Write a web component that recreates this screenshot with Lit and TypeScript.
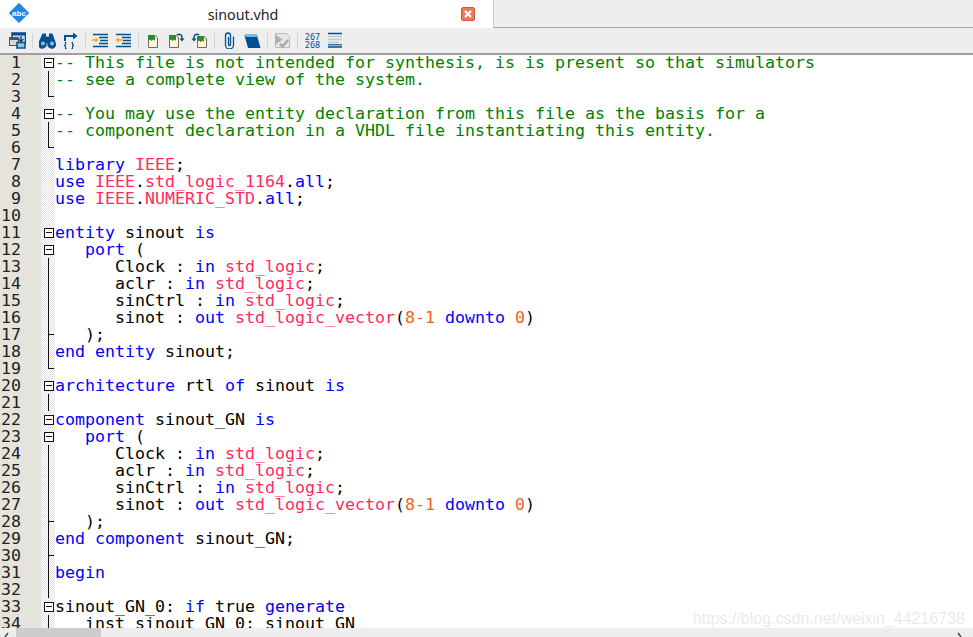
import { html, css, svg, LitElement } from "lit";
import { customElement } from "lit/decorators.js";

type Fold = "" | "box" | "line" | "end" | "tee";
// [class, text]: c comment, k keyword, t library/type, n number
type Token = [string, string];

const STD: Token[] = [["t", "std_logic"], ["", ";"]];

const port = (): [Fold, Token[]][] => [
  ["box", [["", "   "], ["k", "port"], ["", " ("]]],
  ["line", [["", "      Clock : "], ["k", "in"], ["", " "], ...STD]],
  ["line", [["", "      aclr : "], ["k", "in"], ["", " "], ...STD]],
  ["line", [["", "      sinCtrl : "], ["k", "in"], ["", " "], ...STD]],
  [
    "line",
    [
      ["", "      sinot : "],
      ["k", "out"],
      ["", " "],
      ["t", "std_logic_vector"],
      ["", "("],
      ["n", "8-1"],
      ["", " "],
      ["k", "downto"],
      ["", " "],
      ["n", "0"],
      ["", ")"],
    ],
  ],
  ["tee", [["", "   );"]]],
];

const LINES: [Fold, Token[]][] = [
  ["box", [["c", "-- This file is not intended for synthesis, is is present so that simulators"]]],
  ["line", [["c", "-- see a complete view of the system."]]],
  ["end", []],
  ["box", [["c", "-- You may use the entity declaration from this file as the basis for a"]]],
  ["line", [["c", "-- component declaration in a VHDL file instantiating this entity."]]],
  ["end", []],
  ["", [["k", "library"], ["", " "], ["t", "IEEE"], ["", ";"]]],
  ["", [["k", "use"], ["", " "], ["t", "IEEE"], ["", "."], ["t", "std_logic_1164"], ["", "."], ["k", "all"], ["", ";"]]],
  ["", [["k", "use"], ["", " "], ["t", "IEEE"], ["", "."], ["t", "NUMERIC_STD"], ["", "."], ["k", "all"], ["", ";"]]],
  ["", []],
  ["box", [["k", "entity"], ["", " sinout "], ["k", "is"]]],
  ...port(),
  ["line", [["k", "end"], ["", " "], ["k", "entity"], ["", " sinout;"]]],
  ["end", []],
  ["box", [["k", "architecture"], ["", " rtl "], ["k", "of"], ["", " sinout "], ["k", "is"]]],
  ["line", []],
  ["box", [["k", "component"], ["", " sinout_GN "], ["k", "is"]]],
  ...port(),
  ["line", [["k", "end"], ["", " "], ["k", "component"], ["", " sinout_GN;"]]],
  ["tee", []],
  ["line", [["k", "begin"]]],
  ["line", []],
  ["box", [["", "sinout_GN_0: "], ["k", "if"], ["", " true "], ["k", "generate"]]],
  ["line", [["", "   inst sinout_GN_0: sinout_GN"]]],
];

const BLUE = "#00508f";

const ICONS = {
  window: svg`<rect x="3" y="1" width="13.500" height="11" fill="#cfe0ee" stroke="${BLUE}" stroke-width="1.500"/><rect x="3" y="1" width="13.500" height="2.500" fill="${BLUE}"/><rect x="0.500" y="5.500" width="9" height="8" fill="#d8d8d8" stroke="#555"/><rect x="0.500" y="5.500" width="9" height="2.500" fill="#555"/><rect x="8" y="10.500" width="8" height="5.500" fill="#9cc3e0" stroke="${BLUE}" stroke-width="1.500"/><path d="M12 4v5M9.500 7l2.500 2.500L14.500 7" fill="none" stroke="${BLUE}" stroke-width="1.500"/>`,
  binoculars: svg`<path d="M3.500 1.500h3.500v3h3V1.500h3.500l3.500 10a4.400 4.400 0 1 1-8.500-.5H7.500a4.400 4.400 0 1 1-8.500.5z" fill="${BLUE}"/><circle cx="4" cy="11.500" r="2" fill="#8fbcdc"/><circle cx="13" cy="11.500" r="2" fill="#8fbcdc"/>`,
  braces: svg`<path d="M3 9V4h9" fill="none" stroke="${BLUE}" stroke-width="2"/><path d="M11 0.500L15.500 4 11 7.500z" fill="${BLUE}"/><path d="M4.500 10.500H3.500V12.500L2.500 13.500l1 1v2h1M9.500 10.500h1v2l1 1-1 1v2h-1" fill="none" stroke="${BLUE}" stroke-width="1.100"/>`,
  indent: svg`<path d="M1 2.500h15M7 5.500h9M8 8.500h8M7 11.500h9M1 14.500h15" stroke="${BLUE}" stroke-width="1.500"/><path d="M0 8h4" stroke="#f5a623" stroke-width="1.500"/><path d="M3.500 5.500l3 2.500-3 2.500z" fill="#f5a623"/>`,
  outdent: svg`<path d="M1 2.500h15M7 5.500h9M8 8.500h8M7 11.500h9M1 14.500h15" stroke="${BLUE}" stroke-width="1.500"/><path d="M3 8h4.500" stroke="#f5a623" stroke-width="1.500"/><path d="M4 5.500L0.500 8 4 10.500z" fill="#f5a623"/>`,
  doc: svg`<path d="M3.500 3.500h7l2 2.500v9.500h-9z" fill="#fff6dc" stroke="#7a6a55"/><path d="M3 3h7v6L8.500 7.500 6.500 9 5 7.500 3 9z" fill="#2f8a2f"/>`,
  docNext: svg`<path d="M1.500 3.500h7l2 2.500v9.500h-9z" fill="#fff6dc" stroke="#7a6a55"/><path d="M1 3h7v6L6.500 7.500 4.500 9 3 7.500 1 9z" fill="#2f8a2f"/><path d="M9 3a3 3 0 0 1 5 2v2" fill="none" stroke="${BLUE}" stroke-width="1.500"/><path d="M11.500 6.500h5l-2.500 3z" fill="${BLUE}"/>`,
  docPrev: svg`<path d="M6.500 4.500h7l2 2.500v8.500h-9z" fill="#fff6dc" stroke="#7a6a55"/><path d="M6 4h7v6l-1.500-1.500L9.500 10 8 8.500 6 10z" fill="#2f8a2f"/><path d="M8 3a3 3 0 0 0-5 2v2" fill="none" stroke="${BLUE}" stroke-width="1.500"/><path d="M0.500 6.500h5l-2.500 3z" fill="${BLUE}"/>`,
  clip: svg`<path d="M12.500 4.500v8.500a4 4 0 0 1-8 0V3.500a2.500 2.500 0 0 1 5 0v9a1 1 0 0 1-2 0V5" fill="none" stroke="${BLUE}" stroke-width="1.300"/>`,
  scroll: svg`<path d="M0.500 3.500h12.500l3.500 12.500H4z" fill="${BLUE}"/><path d="M1 2h12l1 3H2z" fill="#6cc0ee"/>`,
  note: svg`<path d="M1.500 1.500h11l3 3v11h-14z" fill="#e6e6e6" stroke="#bbb"/><path d="M1 2l7.500 5.500L1 13z" fill="#b0b0b0"/><path d="M6 12l2.500 2.500L14 8" fill="none" stroke="#a8a8a8" stroke-width="2.500"/>`,
  wrap: svg`<path d="M1 1.500h14M1 15h14" stroke="${BLUE}" stroke-width="1.500"/><path d="M1 4.500h14M1 7.500h14" stroke="#c8c8c8" stroke-width="1.500"/><path d="M1 10.500h11" stroke="#c8c8c8" stroke-width="1.500"/><path d="M1 12.800h14" stroke="${BLUE}" stroke-width="1.200"/>`,
};

const TOOLBAR: (keyof typeof ICONS | "sep" | "nums")[] = [
  "window", "sep",
  "binoculars", "braces", "sep",
  "indent", "outdent", "sep",
  "doc", "docNext", "docPrev", "sep",
  "clip", "scroll", "sep",
  "note", "sep",
  "nums", "wrap",
];

@customElement("app-root")
export class AppRoot extends LitElement {
  static styles = css`
    :host {
      display: flex;
      flex-direction: column;
      position: relative;
      width: 973px;
      height: 637px;
      overflow: hidden;
      background: #fff;
      font-family: "Noto Sans", sans-serif;
    }

    .tabbar {
      flex: none;
      display: flex;
      height: 28px;
      background: #fff;
    }

    .logo {
      flex: none;
      width: 20px;
      height: 20px;
      margin: 3px 0 0 9px;
    }

    .tab {
      flex: none;
      display: flex;
      align-items: center;
      width: 464px;
      height: 28px;
    }

    .tab-name {
      width: 428px;
      text-align: center;
      font-size: 14.3px;
      color: #222;
    }

    .tab-close {
      flex: none;
      box-sizing: border-box;
      display: flex;
      align-items: center;
      justify-content: center;
      width: 14px;
      height: 14px;
      margin-left: 4px;
      background: #e8795c;
      border: 1px solid #d4553f;
      border-radius: 2px;
    }

    .tab-rest {
      flex: 1;
      background: #eeeeee;
      border-left: 1px solid #d0d0d0;
      border-bottom: 1px solid #a6a6a6;
    }

    .toolbar {
      flex: none;
      position: relative;
      z-index: 1;
      box-sizing: border-box;
      display: flex;
      align-items: center;
      height: 27px;
      padding-left: 6px;
      background: #eeeeee;
      border-bottom: 2px solid #a0a0a0;
    }

    .tool {
      flex: none;
      display: flex;
      align-items: center;
      justify-content: center;
      width: 23px;
      height: 24px;
    }

    .tool svg {
      width: 17px;
      height: 17px;
    }

    .sep {
      flex: none;
      width: 1px;
      height: 16px;
      margin: 0 3px;
      background: #d2d2d2;
    }

    .nums {
      font-family: "DejaVu Sans Mono", monospace;
      font-size: 8.5px;
      line-height: 8px;
      color: #00508f;
    }

    .editor {
      flex: 1;
      min-height: 0;
      margin-top: -1px;
      overflow: hidden;
    }

    .row {
      display: flex;
      height: 17px;
    }

    .num {
      flex: none;
      box-sizing: border-box;
      width: 41px;
      padding-right: 20px;
      text-align: right;
      background: #e4e4dc;
      color: #222;
      font-family: "DejaVu Sans Mono", monospace;
      font-size: 16.6px;
      line-height: 17px;
    }

    .fold {
      flex: none;
      position: relative;
      width: 14px;
      background-color: #fff;
      background-image: conic-gradient(#e2e2e2 25%, #fff 0 50%, #e2e2e2 0 75%, #fff 0);
      background-size: 2px 2px;
    }

    .box {
      position: absolute;
      left: 3px;
      top: 4px;
      box-sizing: border-box;
      width: 10px;
      height: 10px;
      background: #fff;
      border: 1px solid #111;
    }

    .box::after {
      content: "";
      position: absolute;
      left: 1px;
      top: 3px;
      width: 6px;
      height: 1px;
      background: #111;
    }

    .line::after,
    .end::after,
    .tee::after {
      content: "";
      position: absolute;
      left: 7px;
      top: 0;
      width: 1px;
      height: 17px;
      background: #111;
    }

    .end::after {
      height: 9px;
    }

    .end::before,
    .tee::before {
      content: "";
      position: absolute;
      left: 7px;
      top: 8px;
      width: 6px;
      height: 1px;
      background: #111;
    }

    .code {
      flex: 1;
      margin: 0;
      font-family: "DejaVu Sans Mono", monospace;
      font-size: 16.62px;
      line-height: 17px;
      white-space: pre;
      color: #000;
    }

    .c { color: #008000; }
    .k { color: #0000ff; }
    .t { color: #ff2a5e; }
    .n { color: #f5601e; }

    .scrollbar {
      flex: none;
      display: flex;
      align-items: stretch;
      height: 9px;
      background: #eeeeee;
    }

    .thumb {
      width: 85px;
      background: #cdcdcd;
    }

    .arrow {
      flex: none;
      width: 16px;
      height: 9px;
    }

    .track {
      flex: 1;
    }

    .watermark {
      position: absolute;
      right: 8px;
      top: 609px;
      font-family: "Liberation Sans", sans-serif;
      font-size: 16px;
      line-height: 20px;
      color: rgba(150, 150, 150, 0.22);
    }
  `;

  private renderTool(name: (typeof TOOLBAR)[number]) {
    if (name === "sep") {
      return html`<div class="sep"></div>`;
    }
    if (name === "nums") {
      return html`<div class="tool"><div class="nums">267<br />268</div></div>`;
    }
    return html`<div class="tool"><svg viewBox="0 0 17 17">${ICONS[name]}</svg></div>`;
  }

  render() {
    return html`
      <div class="tabbar">
        <svg class="logo" viewBox="0 0 20 20">
          <path d="M10 0.500l9.500 9.500-9.500 9.500L0.500 10z" fill="#1e88e8" stroke="#0f6fc0" />
          <text x="10" y="12.500" text-anchor="middle" font-family="Liberation Sans" font-size="8" font-weight="700" fill="#fff">abc</text>
        </svg>
        <div class="tab">
          <div class="tab-name">sinout.vhd</div>
          <div class="tab-close">
            <svg width="10" height="10" viewBox="0 0 10 10">
              <path d="M2 2l6 6M8 2l-6 6" stroke="#fff" stroke-width="2.200" />
            </svg>
          </div>
        </div>
        <div class="tab-rest"></div>
      </div>
      <div class="toolbar">${TOOLBAR.map((name) => this.renderTool(name))}</div>
      <div class="editor">
        ${LINES.map(
          ([fold, tokens], i) => html`
            <div class="row">
              <div class="num">${i + 1}</div>
              <div class="fold"><div class="${fold}"></div></div>
              <pre class="code">${tokens.map(([cls, text]) => html`<span class="${cls}">${text}</span>`)}</pre>
            </div>
          `,
        )}
      </div>
      <div class="scrollbar">
        <svg class="arrow" viewBox="0 0 16 9">
          <path d="M8 5L5 9" fill="none" stroke="#444" stroke-width="1.500" />
        </svg>
        <div class="thumb"></div>
        <div class="track"></div>
        <svg class="arrow" viewBox="0 0 16 9">
          <path d="M1 5l3 4" fill="none" stroke="#444" stroke-width="1.500" />
        </svg>
      </div>
      <div class="watermark">https://blog.csdn.net/weixin_44216738</div>
    `;
  }
}
